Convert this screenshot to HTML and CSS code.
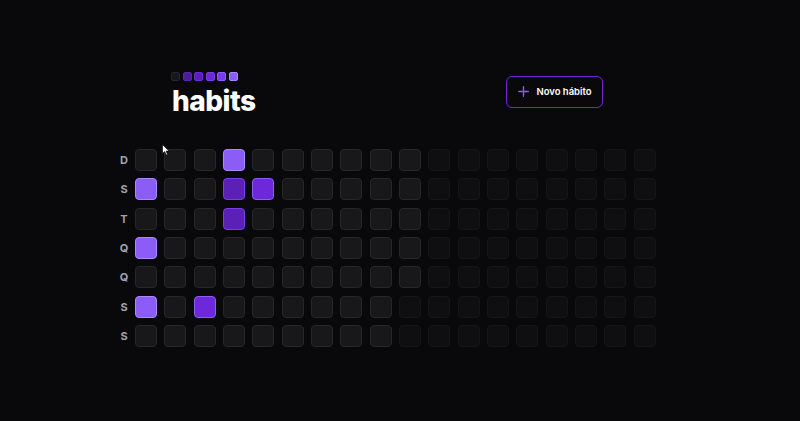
FILE: index.html
```html
<!DOCTYPE html>
<html lang="pt-BR">
<head>
<meta charset="utf-8">
<link rel="stylesheet" href="styles.css">
</head>
<body>
<div class="page">
  <header class="header">
    <div class="brand">
      <div class="logo">
        <span class="lq q0"></span><span class="lq q1"></span><span class="lq q2"></span><span class="lq q3"></span><span class="lq q4"></span><span class="lq q5"></span>
      </div>
      <h1 class="title">habits</h1>
    </div>
    <button class="new-btn" type="button">
      <svg class="plus" viewBox="0 0 12 12" width="11" height="11"><path d="M6 0.8v10.4M0.8 6h10.4" stroke="#8b5cf6" stroke-width="1.5" stroke-linecap="round"/></svg>
      <span>Novo hábito</span>
    </button>
  </header>
  <section class="summary">
    <div class="labels">
      <span>D</span><span>S</span><span>T</span><span>Q</span><span>Q</span><span>S</span><span>S</span>
    </div>
    <div class="grid" id="grid"></div>
  </section>
</div>
<svg class="cursor" viewBox="0 0 8 12" width="8" height="12"><path d="M0.5 0.5 L0.5 9.5 L2.7 7.6 L4.2 11 L5.5 10.4 L4.1 7.1 L7 7.1 Z" fill="#ffffff" stroke="#000" stroke-width="0.6"/></svg>
<script src="app.js"></script>
</body>
</html>
```
FILE: styles.css
```css
* { box-sizing: border-box; }
html, body { margin: 0; padding: 0; }
body {
  background: #09090b;
  width: 800px;
  height: 421px;
  overflow: hidden;
  font-family: Inter, "Noto Sans", "Liberation Sans", sans-serif;
  color: #fff;
  position: relative;
}
.page {
  padding-top: 72px;
  margin-left: 114px;
  display: flex;
  flex-direction: column;
  gap: 35px;
}
.header {
  margin-left: 57px;
  width: 432px;
  display: flex;
  align-items: center;
  justify-content: space-between;
}
.brand { display: flex; flex-direction: column; gap: 7px; }
.logo { display: flex; gap: 2.5px; }
.lq {
  width: 9px; height: 9px; border-radius: 2px; border: 1px solid transparent;
}
.q0 { background: #18181b; border-color: #27272a; }
.q1 { background: #4c1d95; border-color: #5b21b6; }
.q2 { background: #5b21b6; border-color: #6d28d9; }
.q3 { background: #6d28d9; border-color: #7c3aed; }
.q4 { background: #7c3aed; border-color: #8b5cf6; }
.q5 { background: #8b5cf6; border-color: #a78bfa; }
.title {
  margin: 0 0 0 1px;
  font-size: 28px;
  font-weight: 800;
  line-height: 26px;
  letter-spacing: -0.5px;
}
.new-btn {
  width: 97px;
  height: 32px;
  margin-top: -3px;
  border: 1px solid #6d28d9;
  border-radius: 6px;
  background: transparent;
  color: #fff;
  font-family: inherit;
  font-size: 9.5px;
  font-weight: 600;
  display: flex;
  align-items: center;
  justify-content: center;
  gap: 7px;
  padding: 0 0 0 1px;
}
.summary { display: flex; gap: 1px; }
.labels {
  width: 20px;
  display: grid;
  grid-template-rows: repeat(7, 22px);
  row-gap: 7.33px;
}
.labels span {
  display: flex; align-items: center; justify-content: center;
  font-size: 11px; font-weight: 700; color: #a1a1aa;
}
.grid {
  display: grid;
  grid-template-rows: repeat(7, 22px);
  grid-auto-flow: column;
  grid-auto-columns: 22px;
  gap: 7.33px;
}
.day {
  border-radius: 4px;
  background: #18181b;
  border: 1px solid #27272a;
}
.day.future { opacity: 0.45; }
.day.l1 { background: #5b21b6; border-color: #7c3aed; }
.day.l2 { background: #6d28d9; border-color: #8b5cf6; }
.day.l3 { background: #8b5cf6; border-color: #a78bfa; }
.cursor { position: absolute; left: 162px; top: 144px; }
```
FILE: app.js
```js
(function () {
  var grid = document.getElementById('grid');
  var filled = { '0-3': 'l3', '1-0': 'l3', '1-3': 'l1', '1-4': 'l2', '2-3': 'l1', '3-0': 'l3', '5-0': 'l3', '5-2': 'l2' };
  for (var c = 0; c < 18; c++) {
    for (var r = 0; r < 7; r++) {
      var d = document.createElement('div');
      d.className = 'day';
      var past = r < 5 ? c < 10 : c < 9;
      if (!past) d.className += ' future';
      var k = r + '-' + c;
      if (filled[k]) d.className += ' ' + filled[k];
      grid.appendChild(d);
    }
  }
})();
```
